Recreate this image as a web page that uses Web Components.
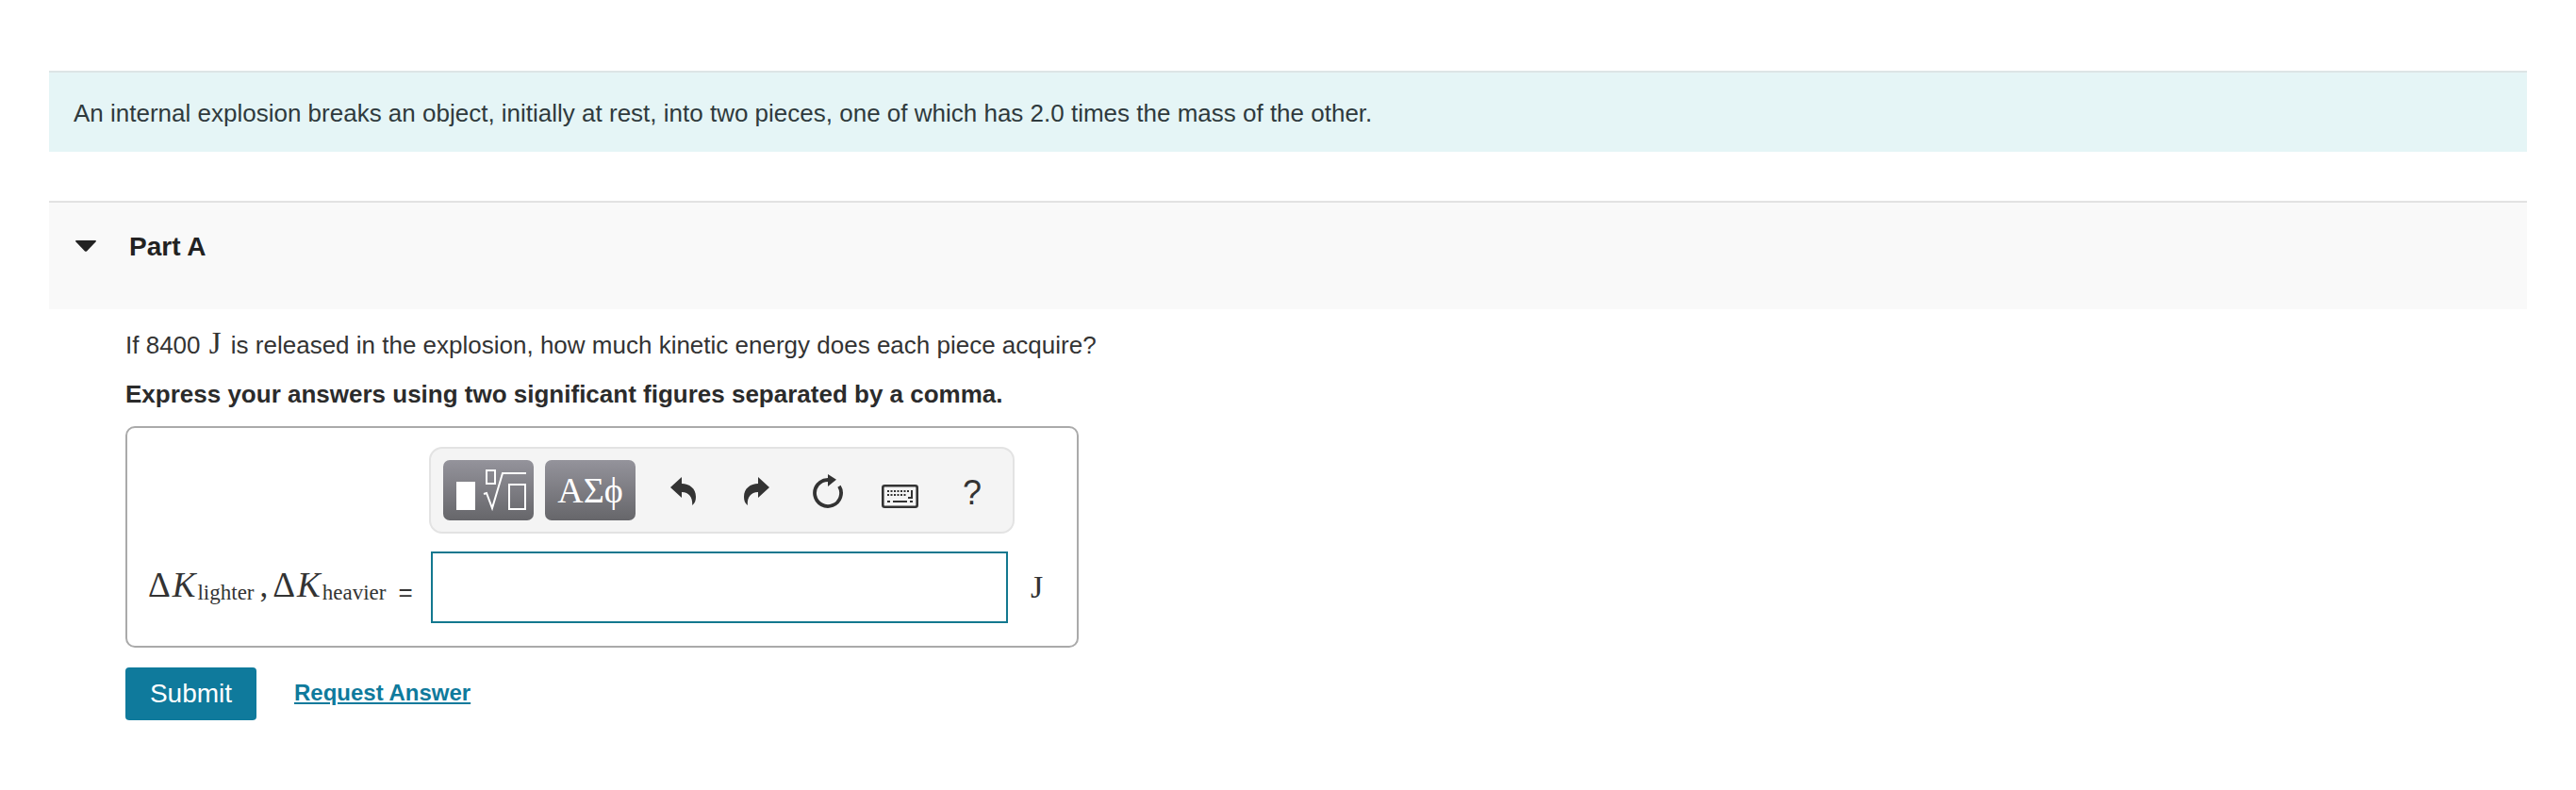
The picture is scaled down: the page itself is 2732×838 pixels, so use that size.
<!DOCTYPE html>
<html>
<head>
<meta charset="utf-8">
<title>Part A</title>
<style>
  html, body { margin: 0; background: #fff; }
  body { padding: 75px 52px 0; font-family: "Liberation Sans", Arial, sans-serif; color: #333; }
</style>
</head>
<body>
<intro-banner>An internal explosion breaks an object, initially at rest, into two pieces, one of which has 2.0 times the mass of the other.</intro-banner>
<part-header>Part A</part-header>
<part-body>
  <span slot="question">If 8400 <unit-j></unit-j> is released in the explosion, how much kinetic energy does each piece acquire?</span>
  <span slot="hint">Express your answers using two significant figures separated by a comma.</span>
  <answer-box></answer-box>
  <submit-row></submit-row>
</part-body>

<script>
class IntroBanner extends HTMLElement {
  connectedCallback() {
    this.attachShadow({ mode: 'open' });
    this.shadowRoot.innerHTML = `
      <style>
        :host {
          display: flex;
          align-items: center;
          box-sizing: border-box;
          height: 86px;
          padding: 3px 26px 0;
          background: #e5f5f6;
          border-top: 2px solid #dde5e6;
          font-size: 26px;
          color: #2f3a3d;
        }
      </style>
      <slot></slot>
    `;
  }
}

class PartHeader extends HTMLElement {
  connectedCallback() {
    this.attachShadow({ mode: 'open' });
    this.shadowRoot.innerHTML = `
      <style>
        :host {
          display: flex;
          align-items: flex-start;
          box-sizing: border-box;
          height: 115px;
          margin-top: 52px;
          padding: 31px 0 0 28px;
          background: #f9f9f9;
          border-top: 2px solid #e2e2e2;
          font-size: 28px;
          font-weight: bold;
          line-height: 32px;
          color: #222;
        }
        svg { width: 22px; height: 12px; margin: 9px 35px 0 0; flex: none; }
      </style>
      <svg viewBox="0 0 22 12"><path d="M0 1Q0 0 1 0H21Q22 0 22 1L12 11.500Q11 12 10 11.500Z" fill="#222"/></svg>
      <slot></slot>
    `;
  }
}

class UnitJ extends HTMLElement {
  connectedCallback() {
    this.attachShadow({ mode: 'open' });
    this.shadowRoot.innerHTML = `
      <style>
        :host { display: inline; margin: 0 2px; font-family: "Liberation Serif", "Times New Roman", serif; font-size: 33px; line-height: 0; }
      </style>
      J
    `;
  }
}

class PartBody extends HTMLElement {
  connectedCallback() {
    this.attachShadow({ mode: 'open' });
    this.shadowRoot.innerHTML = `
      <style>
        :host {
          display: block;
          padding: 20px 0 0 81px;
          font-size: 26px;
        }
        .q { line-height: 36px; color: #333; }
        .h { margin-top: 16px; line-height: 36px; font-weight: bold; color: #2b2b2b; }
        .content { margin-top: 16px; }
      </style>
      <div class="q"><slot name="question"></slot></div>
      <div class="h"><slot name="hint"></slot></div>
      <div class="content"><slot></slot></div>
    `;
  }
}

class MathToolbar extends HTMLElement {
  connectedCallback() {
    this.attachShadow({ mode: 'open' });
    this.shadowRoot.innerHTML = `
      <style>
        :host {
          display: flex;
          align-items: center;
          box-sizing: border-box;
          width: 621px;
          height: 92px;
          padding: 0 0 0 13px;
          background: #f4f4f4;
          border: 2px solid #e3e3e3;
          border-radius: 14px;
        }
        .tpl {
          display: flex;
          align-items: center;
          justify-content: center;
          flex: none;
          width: 96px;
          height: 64px;
          margin-right: 12px;
          border-radius: 7px;
          background: linear-gradient(#94939b, #66666a);
        }
        .sym {
          color: #fff;
          font-family: "Liberation Serif", serif;
          font-size: 38px;
          white-space: nowrap;
        }
        .icons {
          display: grid;
          grid-template-columns: 76px 80px 72px 80px 74px;
          align-items: center;
          justify-items: center;
        }
        .icons svg { margin-top: 2px; }
        .icons svg.kb { margin-top: 12px; }
        .q { padding-top: 5px; font-size: 36px; color: #333; }
      </style>
      <div class="tpl">
        <svg width="96" height="64" viewBox="0 0 96 64" fill="none">
          <rect x="14" y="23" width="20" height="30" fill="#fff"/>
          <rect x="46" y="11" width="9" height="14" stroke="#fff" stroke-width="2"/>
          <path d="M43 36l3-1 6 16 11-37h25" stroke="#fff" stroke-width="2"/>
          <rect x="70" y="26" width="17" height="26" stroke="#fff" stroke-width="2"/>
        </svg>
      </div>
      <div class="tpl"><span class="sym">ΑΣϕ</span></div>
      <div class="icons">
        <svg width="27" height="30" viewBox="0 0 27 30"><path d="M0 11L12 0V7C20 7 27 12 27 21C27 25 26 28 23 30C24 24 21 16 12 16V22Z" fill="#333"/></svg>
        <svg width="27" height="30" viewBox="0 0 27 30"><path d="M27 11L15 0V7C7 7 0 12 0 21C0 25 1 28 4 30C3 24 6 16 15 16V22Z" fill="#333"/></svg>
        <svg width="33" height="36" viewBox="0 0 33 36" fill="none"><path d="M28 12.700A14 14 0 1 1 16 6" stroke="#333" stroke-width="3.800"/><path d="M16 0L25 5.700L16 13Z" fill="#333"/></svg>
        <svg class="kb" width="39" height="25" viewBox="0 0 39 25" fill="none"><rect x="1.300" y="1.300" width="36.400" height="22.400" rx="2" stroke="#333" stroke-width="2.600"/><path d="M6 7H30M6 11H27" stroke="#333" stroke-width="2" stroke-dasharray="2 1.500"/><path d="M6 18H9M30 18H33M12 18H27M32 6V14H28" stroke="#333" stroke-width="2"/></svg>
        <div class="q">?</div>
      </div>
    `;
  }
}

class AnswerBox extends HTMLElement {
  connectedCallback() {
    this.attachShadow({ mode: 'open' });
    this.shadowRoot.innerHTML = `
      <style>
        :host {
          display: block;
          box-sizing: border-box;
          width: 1011px;
          height: 235px;
          padding: 20px 0 0 22px;
          background: #fff;
          border: 2px solid #aaa;
          border-radius: 10px;
        }
        math-toolbar { margin-left: 298px; }
        .row { display: flex; align-items: center; margin-top: 19px; height: 76px; }
        .math {
          width: 300px;
          flex: none;
          padding-bottom: 3px;
          font-family: "Liberation Serif", serif;
          font-size: 37px;
          color: #333;
          white-space: nowrap;
        }
        .math i { font-size: 37px; margin: 0 2px; }
        .math sub { font-size: 23px; line-height: 0; vertical-align: -3px; }
        .comma { font-size: 35px; margin: 0 5px 0 6px; }
        .eq { font-family: "Liberation Sans", sans-serif; font-size: 26px; margin-left: 13px; vertical-align: -4px; }
        .input {
          box-sizing: border-box;
          width: 612px;
          height: 76px;
          flex: none;
          background: #fff;
          border: 2px solid #13788f;
        }
        .unit {
          margin-left: 24px;
          font-family: "Liberation Serif", serif;
          font-size: 34px;
          color: #333;
        }
      </style>
      <math-toolbar></math-toolbar>
      <div class="row">
        <div class="math">Δ<i>K</i><sub>lighter</sub><span class="comma">,</span>Δ<i>K</i><sub>heavier</sub><span class="eq">=</span></div>
        <div class="input"></div>
        <div class="unit">J</div>
      </div>
    `;
  }
}

class SubmitRow extends HTMLElement {
  connectedCallback() {
    this.attachShadow({ mode: 'open' });
    this.shadowRoot.innerHTML = `
      <style>
        :host {
          display: flex;
          align-items: center;
          margin-top: 21px;
          gap: 40px;
        }
        .btn {
          display: flex;
          align-items: center;
          justify-content: center;
          width: 139px;
          height: 56px;
          background: #0f7a9c;
          color: #fff;
          border-radius: 4px;
          font-size: 28px;
        }
        a {
          color: #0f7a9c;
          font-weight: bold;
          font-size: 24px;
          text-decoration: underline;
          margin-top: -3px;
        }
      </style>
      <div class="btn">Submit</div>
      <a href="#">Request Answer</a>
    `;
  }
}

customElements.define('intro-banner', IntroBanner);
customElements.define('part-header', PartHeader);
customElements.define('unit-j', UnitJ);
customElements.define('part-body', PartBody);
customElements.define('math-toolbar', MathToolbar);
customElements.define('answer-box', AnswerBox);
customElements.define('submit-row', SubmitRow);
</script>
</body>
</html>
